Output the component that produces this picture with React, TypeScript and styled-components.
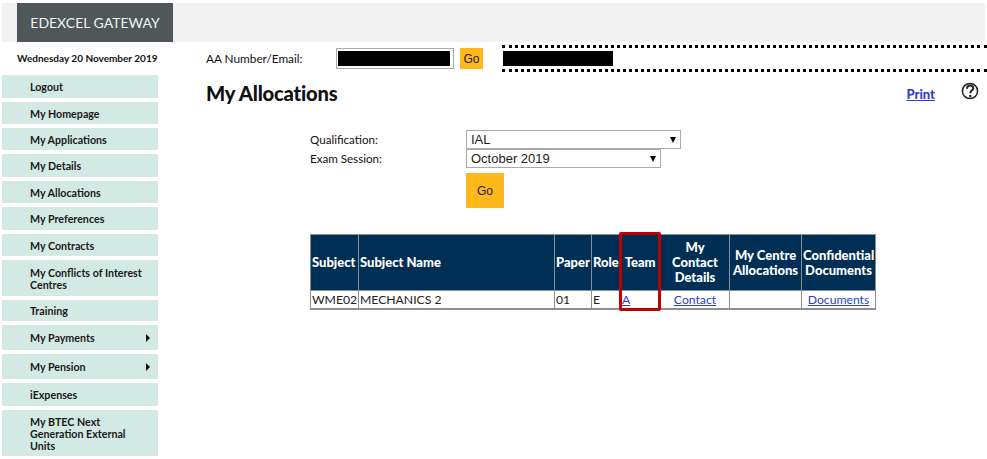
import React from 'react';
import styled, { createGlobalStyle } from 'styled-components';

const GlobalStyle = createGlobalStyle`
    html, body {
        margin: 0;
        padding: 0;
        background: #fff;
    }
    body {
        font-family: Lato, "Open Sans", sans-serif;
        color: #111;
    }
`;

const Page = styled.div`
    width: 987px;
    height: 459px;
    overflow: hidden;
    padding-top: 3px;
    box-sizing: border-box;
`;

const TopBar = styled.header`
    height: 39px;
    margin: 0 2px;
    padding-left: 15px;
    background: #f2f2f2;
`;

const Logo = styled.div`
    width: 156px;
    height: 39px;
    display: flex;
    align-items: center;
    justify-content: center;
    background: #505759;
    color: #f2f2f2;
    font-size: 14px;
`;

const Body = styled.div`
    display: flex;
`;

const Sidebar = styled.nav`
    width: 156px;
    margin-left: 2px;
    flex: none;
`;

const DateLine = styled.div`
    height: 33px;
    padding: 10px 0 0 15px;
    box-sizing: border-box;
    font-size: 10px;
    font-weight: 700;
    white-space: nowrap;
`;

const NavItem = styled.a<{ $height: number }>`
    display: flex;
    align-items: center;
    justify-content: space-between;
    height: ${props => props.$height}px;
    margin-bottom: 4px;
    padding: 1px 8px 0 28px;
    box-sizing: border-box;
    background: #d3e9e3;
    color: #1a1a1a;
    font-size: 10.7px;
    font-weight: 700;
    line-height: 12px;
`;

const Caret = styled.span`
    width: 0;
    height: 0;
    border-left: 4px solid #111;
    border-top: 4px solid transparent;
    border-bottom: 4px solid transparent;
`;

const Main = styled.main`
    flex: 1;
    padding-left: 48px;
    min-width: 0;
`;

const SearchRow = styled.div`
    display: flex;
    align-items: center;
    height: 31px;
    margin-top: 1px;
`;

const SearchLabel = styled.span`
    width: 130px;
    font-size: 11.8px;
`;

const SearchInput = styled.div`
    width: 118px;
    height: 21px;
    padding: 2px 1px;
    box-sizing: border-box;
    border: 1px solid #aaa;
    background: #fff;
`;

const Redaction = styled.div<{ $width: number }>`
    width: ${props => props.$width}px;
    height: 15px;
    background: #000;
`;

const SmallGo = styled.button`
    width: 23px;
    height: 21px;
    margin-left: 6px;
    padding: 0;
    border: 0;
    background: #ffb81c;
    color: #222;
    font-family: "Liberation Sans", sans-serif;
    font-size: 12px;
`;

const UserBox = styled.div`
    flex: 1;
    height: 21px;
    margin-left: 19px;
    display: flex;
    align-items: center;
    padding-left: 1px;
    border-top: 3px dotted #000;
    border-bottom: 3px dotted #000;
`;

const TitleRow = styled.div`
    display: flex;
    align-items: flex-start;
    height: 56px;
`;

const Title = styled.h1`
    flex: 1;
    margin: 7px 0 0;
    font-size: 20.2px;
    line-height: 24px;
    font-weight: 900;
    letter-spacing: -0.2px;
`;

const PrintLink = styled.a`
    margin: 12px 26px 0 0;
    color: #2a3fd0;
    font-size: 13px;
    font-weight: 900;
    text-decoration: underline;
`;

const Help = styled.svg`
    width: 18px;
    height: 20px;
    margin: 7px 8px 0 0;
`;

const FormGrid = styled.div`
    display: grid;
    grid-template-columns: 156px auto;
    justify-content: start;
    margin-left: 104px;
    font-size: 11.6px;
`;

const FormLabel = styled.label`
    display: flex;
    align-items: center;
    height: 19px;
`;

const FakeSelect = styled.div<{ $width: number }>`
    width: ${props => props.$width}px;
    height: 19px;
    display: flex;
    align-items: center;
    justify-content: space-between;
    padding: 0 4px;
    box-sizing: border-box;
    border: 1px solid #aaa;
    background: #fff;
    color: #222;
    font-family: "Liberation Sans", sans-serif;
    font-size: 13px;
`;

const SelectArrow = styled.span`
    width: 0;
    height: 0;
    border-top: 6px solid #000;
    border-left: 3px solid transparent;
    border-right: 3px solid transparent;
`;

const BigGo = styled.button`
    grid-column: 2;
    width: 38px;
    height: 35px;
    margin-top: 5px;
    padding: 0;
    border: 0;
    background: #ffb81c;
    color: #222;
    font-family: "Liberation Sans", sans-serif;
    font-size: 12px;
`;

const TableWrap = styled.div`
    position: relative;
    width: 566px;
    margin: 26px 0 0 104px;
`;

const Table = styled.table`
    width: 566px;
    table-layout: fixed;
    border-collapse: collapse;
    font-size: 12.2px;
`;

const Th = styled.th<{ $left?: boolean; $width: number }>`
    width: ${props => props.$width}px;
    height: 56px;
    padding: 0 1px;
    box-sizing: border-box;
    border: 1px solid #8a8f92;
    background: #002f56;
    color: #fff;
    font-weight: 900;
    font-size: 13px;
    line-height: 15px;
    text-align: ${props => (props.$left ? 'left' : 'center')};
    white-space: nowrap;
`;

const Td = styled.td<{ $center?: boolean }>`
    height: 18px;
    padding: 1px 1px 0;
    box-sizing: border-box;
    border: 1px solid #8a8f92;
    border-bottom-width: 2px;
    text-align: ${props => (props.$center ? 'center' : 'left')};
    color: #222;
    white-space: nowrap;
`;

const CellLink = styled.a`
    color: #2a3fd0;
    text-decoration: underline;
`;

const Highlight = styled.div`
    position: absolute;
    left: 309px;
    top: -2px;
    width: 36px;
    height: 73px;
    border: 3px solid #c00000;
    border-radius: 2px;
`;

const navItems: { label: string; height: number; caret?: boolean }[] = [
    { label: 'Logout', height: 23 },
    { label: 'My Homepage', height: 22 },
    { label: 'My Applications', height: 22 },
    { label: 'My Details', height: 23 },
    { label: 'My Allocations', height: 22 },
    { label: 'My Preferences', height: 23 },
    { label: 'My Contracts', height: 22 },
    { label: 'My Conflicts of Interest Centres', height: 36 },
    { label: 'Training', height: 21 },
    { label: 'My Payments', height: 25, caret: true },
    { label: 'My Pension', height: 25, caret: true },
    { label: 'iExpenses', height: 23 },
    { label: 'My BTEC Next Generation External Units', height: 46 },
];

const App = () => (
    <Page>
        <GlobalStyle />
        <TopBar>
            <Logo>EDEXCEL GATEWAY</Logo>
        </TopBar>
        <Body>
            <Sidebar>
                <DateLine>Wednesday 20 November 2019</DateLine>
                {navItems.map(item => (
                    <NavItem key={item.label} $height={item.height}>
                        <span>{item.label}</span>
                        {item.caret && <Caret />}
                    </NavItem>
                ))}
            </Sidebar>
            <Main>
                <SearchRow>
                    <SearchLabel>AA Number/Email:</SearchLabel>
                    <SearchInput>
                        <Redaction $width={112} />
                    </SearchInput>
                    <SmallGo>Go</SmallGo>
                    <UserBox>
                        <Redaction $width={110} />
                    </UserBox>
                </SearchRow>
                <TitleRow>
                    <Title>My Allocations</Title>
                    <PrintLink>Print</PrintLink>
                    <Help viewBox="0 0 18 20">
                        <circle cx="9" cy="10" r="7.6" fill="none" stroke="#222" strokeWidth="1.5" />
                        <path
                            d="M6 7.8C6.1 5.6 7.5 4.6 9.2 4.6c1.8 0 3 1.1 3 2.6 0 1.3-.8 1.9-1.7 2.6-.8.6-1.2 1.2-1.2 2.4"
                            fill="none"
                            stroke="#222"
                            strokeWidth="2"
                        />
                        <circle cx="9.3" cy="15" r="1.2" fill="#222" />
                    </Help>
                </TitleRow>
                <FormGrid>
                    <FormLabel>Qualification:</FormLabel>
                    <FakeSelect $width={215}>
                        IAL
                        <SelectArrow />
                    </FakeSelect>
                    <FormLabel>Exam Session:</FormLabel>
                    <FakeSelect $width={195}>
                        October 2019
                        <SelectArrow />
                    </FakeSelect>
                    <BigGo>Go</BigGo>
                </FormGrid>
                <TableWrap>
                    <Table>
                        <thead>
                            <tr>
                                <Th $left $width={48}>Subject</Th>
                                <Th $left $width={196}>Subject Name</Th>
                                <Th $left $width={37}>Paper</Th>
                                <Th $left $width={29}>Role</Th>
                                <Th $left $width={40}>&nbsp;Team</Th>
                                <Th $width={69}>My<br />Contact<br />Details</Th>
                                <Th $width={72}>My Centre<br />Allocations</Th>
                                <Th $width={74}>Confidential<br />Documents</Th>
                            </tr>
                        </thead>
                        <tbody>
                            <tr>
                                <Td>WME02</Td>
                                <Td>MECHANICS 2</Td>
                                <Td>01</Td>
                                <Td>E</Td>
                                <Td><CellLink>A</CellLink></Td>
                                <Td $center><CellLink>Contact</CellLink></Td>
                                <Td $center />
                                <Td $center><CellLink>Documents</CellLink></Td>
                            </tr>
                        </tbody>
                    </Table>
                    <Highlight />
                </TableWrap>
            </Main>
        </Body>
    </Page>
);

export default App;
